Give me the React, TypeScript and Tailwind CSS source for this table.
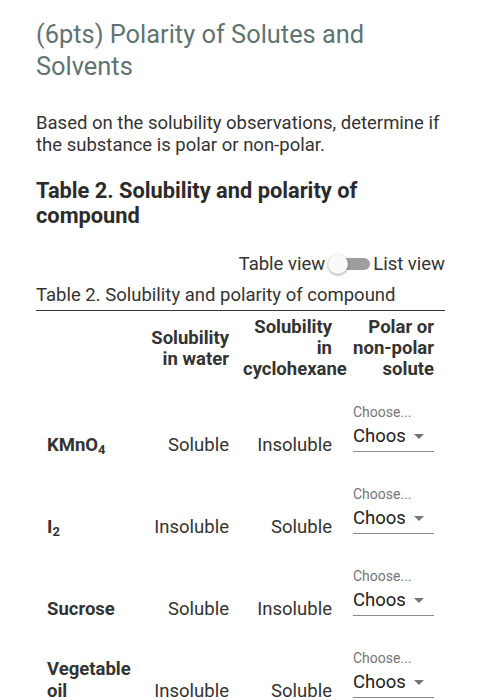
import React from 'react';

const rows = [
  { name: <>KMnO<sub className="text-[13px] relative top-[3px] align-baseline">4</sub></>, water: 'Soluble', hexane: 'Insoluble' },
  { name: <>I<sub className="text-[13px] relative top-[3px] align-baseline">2</sub></>, water: 'Insoluble', hexane: 'Soluble' },
  { name: 'Sucrose', water: 'Soluble', hexane: 'Insoluble' },
  { name: 'Vegetable oil', water: 'Insoluble', hexane: 'Soluble' },
];

const ChooseSelect = () => (
  <div className="flex flex-col">
    <span className="text-[14px] leading-[16px] text-[#757575]">Choose...</span>
    <div className="mb-[4px] flex items-center border-b border-[#8a8a8a] pt-[5px] pb-[4px]">
      <span className="w-[52px] overflow-hidden whitespace-nowrap text-[18.5px] leading-[22px] text-[#222]">Choose...</span>
      {/* dropdown caret */}
      <svg width="10" height="5" viewBox="0 0 10 5" className="ml-[9px]">
        <path d="M0 0 L10 0 L5 5 Z" fill="#757575" />
      </svg>
    </div>
  </div>
);

const App = () => {
  return (
    <div className="min-h-screen bg-white px-[36px] pt-[18px] font-['Roboto',sans-serif] text-[#333]">
      <h1 className="text-[25.4px] leading-[32px] font-normal text-[#5f7472]">
        (6pts) Polarity of Solutes and Solvents
      </h1>

      <p className="mt-[31px] text-[18.5px] leading-[21.5px] text-[#333]">
        Based on the solubility observations, determine if the substance is polar or non-polar.
      </p>

      <h2 className="mt-[22px] text-[21.8px] leading-[25px] font-bold text-[#2b2b2b]">
        Table 2. Solubility and polarity of compound
      </h2>

      {/* view toggle */}
      <div className="mt-[25px] flex items-center justify-end text-[18.5px] leading-[22px] text-[#333]">
        <span>Table view</span>
        <div className="relative ml-[3px] mr-[3px] h-[20px] w-[42px]">
          <div className="absolute left-[12px] top-[4px] h-[12px] w-[30px] rounded-full bg-[#9e9e9e]" />
          <div className="absolute left-0 top-0 h-[20px] w-[20px] rounded-full bg-[#fafafa] shadow-[0_1px_3px_rgba(0,0,0,0.4)]" />
        </div>
        <span>List view</span>
      </div>

      <div className="mt-[9px] pb-[4px] text-[18.5px] leading-[22px] text-[#333] border-b border-[#333]">
        Table 2. Solubility and polarity of compound
      </div>

      {/* header */}
      <div className="grid grid-cols-[105px_95px_103px_106px] items-center pt-[6px] pb-[9px] text-[18.5px] leading-[21px] font-bold text-[#333]">
        <div />
        <div className="pr-[7px] text-right">Solubility in water</div>
        <div className="pl-[7px] pr-[7px] text-right">Solubility in cyclohexane</div>
        <div className="pl-[14px] pr-[11px] text-right">Polar or non-polar solute</div>
      </div>

      {rows.map((r, i) => (
        <div key={i} className="grid grid-cols-[105px_95px_103px_106px] items-end py-[15px] text-[18.5px] leading-[22px]">
          <div className="pl-[11px] pr-[8px] font-bold text-[#333]">{r.name}</div>
          <div className="pr-[7px] text-right text-[#333]">{r.water}</div>
          <div className="pl-[7px] pr-[7px] text-right text-[#333]">{r.hexane}</div>
          <div className="pl-[14px] pr-[11px]">
            <ChooseSelect />
          </div>
        </div>
      ))}
    </div>
  );
};

export default App;
